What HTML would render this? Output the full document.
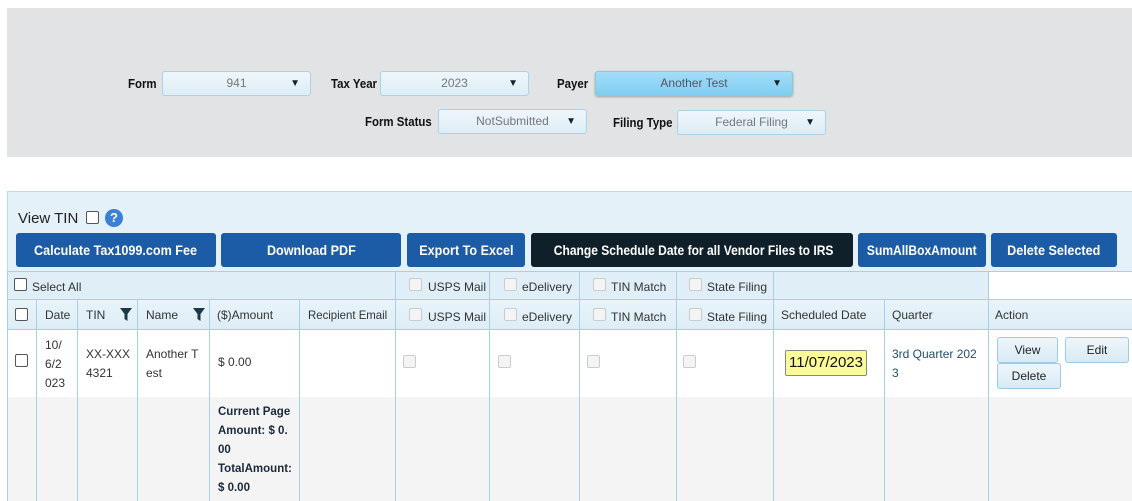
<!DOCTYPE html>
<html><head><meta charset="utf-8"><style>
*{box-sizing:border-box;margin:0;padding:0}
body{width:1132px;height:501px;overflow:hidden;background:#fff;font-family:"Liberation Sans",sans-serif;position:relative;color:#333}
.a{position:absolute}
.top{left:7px;top:8px;width:1125px;height:149px;background:#e2e3e5}
.lbl{font-size:13px;color:#111;font-weight:bold;transform:scaleX(.88);transform-origin:left}
.sel{height:25px;border:1px solid #a9d3ea;border-radius:3px;background:linear-gradient(#eef6fb,#deedf6);font-size:12px;color:#777;text-align:center;line-height:23px}
.sel i{position:absolute;right:10px;top:0;font-style:normal;font-size:10px;color:#123}
.panel{left:7px;top:191px;width:1125px;height:310px;background:#e4f1f8;border:1px solid #b9dbea;border-right:none;border-bottom:none}
.btn{top:233px;height:34px;background:#1c5ca6;color:#fff;font-weight:bold;font-size:14px;text-align:center;line-height:34px;border-radius:3px;white-space:nowrap;overflow:hidden}
.btn span{display:inline-block;transform:scaleX(.9)}
.cell{font-size:12px;color:#333}
.vl{width:1px;background:#a9cfe3}
.hl{height:1px;background:#a9cfe3}
.cb{width:13px;height:13px;border:1px solid #555;border-radius:2px;background:#fff}
.cbg{width:13px;height:13px;border:1px solid #ccc;border-radius:2px;background:#f4f4f4}
.sb{height:26px;border:1px solid #9ccbe4;border-radius:3px;background:linear-gradient(#eef6fb,#d8eaf4);font-size:12px;color:#222;text-align:center;line-height:24px}
</style></head><body>
<div class="a top"></div>
<div class="a lbl" style="left:128px;top:76px">Form</div>
<div class="a sel" style="left:162px;top:71px;width:149px">941<i>▼</i></div>
<div class="a lbl" style="left:331px;top:76px">Tax Year</div>
<div class="a sel" style="left:380px;top:71px;width:149px">2023<i>▼</i></div>
<div class="a lbl" style="left:557px;top:76px">Payer</div>
<div class="a sel" style="left:595px;top:71px;width:198px;background:linear-gradient(#a4ddf7,#7fcdf2);border-color:#8cc;color:#556;box-shadow:0 1px 2px rgba(0,0,0,.3)">Another Test<i>▼</i></div>
<div class="a lbl" style="left:365px;top:114px">Form Status</div>
<div class="a sel" style="left:438px;top:109px;width:149px">NotSubmitted<i>▼</i></div>
<div class="a lbl" style="left:613px;top:115px">Filing Type</div>
<div class="a sel" style="left:677px;top:110px;width:149px">Federal Filing<i>▼</i></div>

<div class="a panel"></div>
<div class="a" style="left:18px;top:210px;font-size:15px;color:#222">View TIN</div>
<div class="a cb" style="left:86px;top:211px"></div>
<div class="a" style="left:105px;top:209px;width:18px;height:18px;border-radius:50%;background:#3b7fd6;color:#fff;font-size:13px;font-weight:bold;text-align:center;line-height:18px">?</div>
<div class="a btn" style="left:16px;width:200px"><span>Calculate Tax1099.com Fee</span></div>
<div class="a btn" style="left:221px;width:180px"><span>Download PDF</span></div>
<div class="a btn" style="left:407px;width:118px"><span>Export To Excel</span></div>
<div class="a btn" style="left:531px;width:322px;background:#10202b"><span style="transform:scaleX(.86)">Change Schedule Date for all Vendor Files to IRS</span></div>
<div class="a btn" style="left:858px;width:128px"><span style="transform:scaleX(.86)">SumAllBoxAmount</span></div>
<div class="a btn" style="left:991px;width:126px"><span>Delete Selected</span></div>

<div class="a" style="left:7px;top:271px;width:981px;height:28px;background:#e0eef7"></div>
<div class="a" style="left:988px;top:271px;width:144px;height:28px;background:#fff"></div>
<div class="a" style="left:7px;top:299px;width:1125px;height:30px;background:linear-gradient(#e9f4fa,#ddedf6)"></div>
<div class="a" style="left:7px;top:329px;width:1125px;height:68px;background:#fff"></div>
<div class="a" style="left:7px;top:397px;width:1125px;height:104px;background:#f4f4f4"></div>
<div class="a hl" style="left:7px;top:271px;width:1125px"></div>
<div class="a hl" style="left:7px;top:299px;width:1125px"></div>
<div class="a hl" style="left:7px;top:329px;width:1125px"></div>
<div class="a vl" style="left:7px;top:271px;height:230px"></div>
<div class="a vl" style="left:36px;top:299px;height:202px"></div>
<div class="a vl" style="left:77px;top:299px;height:202px"></div>
<div class="a vl" style="left:137px;top:299px;height:202px"></div>
<div class="a vl" style="left:209px;top:299px;height:202px"></div>
<div class="a vl" style="left:299px;top:299px;height:202px"></div>
<div class="a vl" style="left:395px;top:271px;height:230px"></div>
<div class="a vl" style="left:489px;top:271px;height:230px"></div>
<div class="a vl" style="left:579px;top:271px;height:230px"></div>
<div class="a vl" style="left:676px;top:271px;height:230px"></div>
<div class="a vl" style="left:773px;top:271px;height:230px"></div>
<div class="a vl" style="left:884px;top:299px;height:202px"></div>
<div class="a vl" style="left:988px;top:271px;height:230px"></div>

<div class="a cb" style="left:14px;top:278px"></div>
<div class="a cell" style="left:32px;top:280px">Select All</div>
<div class="a cbg" style="left:409px;top:278px"></div><div class="a cell" style="left:428px;top:280px">USPS Mail</div>
<div class="a cbg" style="left:504px;top:278px"></div><div class="a cell" style="left:522px;top:280px">eDelivery</div>
<div class="a cbg" style="left:593px;top:278px"></div><div class="a cell" style="left:611px;top:280px">TIN Match</div>
<div class="a cbg" style="left:689px;top:278px"></div><div class="a cell" style="left:707px;top:280px">State Filing</div>
<div class="a cb" style="left:15px;top:308px"></div>
<div class="a cell" style="left:45px;top:308px">Date</div>
<div class="a cell" style="left:86px;top:308px">TIN</div>
<svg class="a" style="left:120px;top:308px" width="12" height="13"><path d="M0 0H12L7.5 6V13L4.5 11V6Z" fill="#1a3a4a"/></svg>
<div class="a cell" style="left:146px;top:308px">Name</div>
<svg class="a" style="left:193px;top:308px" width="12" height="13"><path d="M0 0H12L7.5 6V13L4.5 11V6Z" fill="#1a3a4a"/></svg>
<div class="a cell" style="left:217px;top:308px">($)Amount</div>
<div class="a cell" style="left:308px;top:308px;transform:scaleX(.95);transform-origin:left">Recipient Email</div>
<div class="a cbg" style="left:409px;top:308px"></div><div class="a cell" style="left:428px;top:310px">USPS Mail</div>
<div class="a cbg" style="left:504px;top:308px"></div><div class="a cell" style="left:522px;top:310px">eDelivery</div>
<div class="a cbg" style="left:593px;top:308px"></div><div class="a cell" style="left:611px;top:310px">TIN Match</div>
<div class="a cbg" style="left:689px;top:308px"></div><div class="a cell" style="left:707px;top:310px">State Filing</div>
<div class="a cell" style="left:781px;top:308px">Scheduled Date</div>
<div class="a cell" style="left:892px;top:308px">Quarter</div>
<div class="a cell" style="left:995px;top:308px">Action</div>
<div class="a cb" style="left:15px;top:354px"></div>
<div class="a cell" style="left:45px;top:336px;line-height:19px;width:28px">10/<br>6/2<br>023</div>
<div class="a cell" style="left:86px;top:345px;line-height:19px">XX-XXX<br>4321</div>
<div class="a cell" style="left:146px;top:345px;line-height:19px">Another T<br>est</div>
<div class="a cell" style="left:218px;top:355px">$ 0.00</div>
<div class="a cbg" style="left:403px;top:355px"></div>
<div class="a cbg" style="left:498px;top:355px"></div>
<div class="a cbg" style="left:587px;top:355px"></div>
<div class="a cbg" style="left:683px;top:355px"></div>
<div class="a" style="left:785px;top:350px;width:82px;height:26px;background:#fbfb9a;border:1px solid #888;border-radius:2px;font-size:15px;color:#111;line-height:24px;text-align:center">11/07/2023</div>
<div class="a cell" style="left:892px;top:345px;line-height:19px;color:#1f4f6a">3rd Quarter 202<br>3</div>
<div class="a sb" style="left:997px;top:337px;width:61px">View</div>
<div class="a sb" style="left:1065px;top:337px;width:64px">Edit</div>
<div class="a sb" style="left:997px;top:363px;width:64px">Delete</div>
<div class="a cell" style="left:218px;top:403px;line-height:19px;font-weight:bold;color:#1a2a3a;font-size:11.5px">Current Page<br>Amount: $ 0.<br>00<br>TotalAmount:<br>$ 0.00</div>
</body></html>
